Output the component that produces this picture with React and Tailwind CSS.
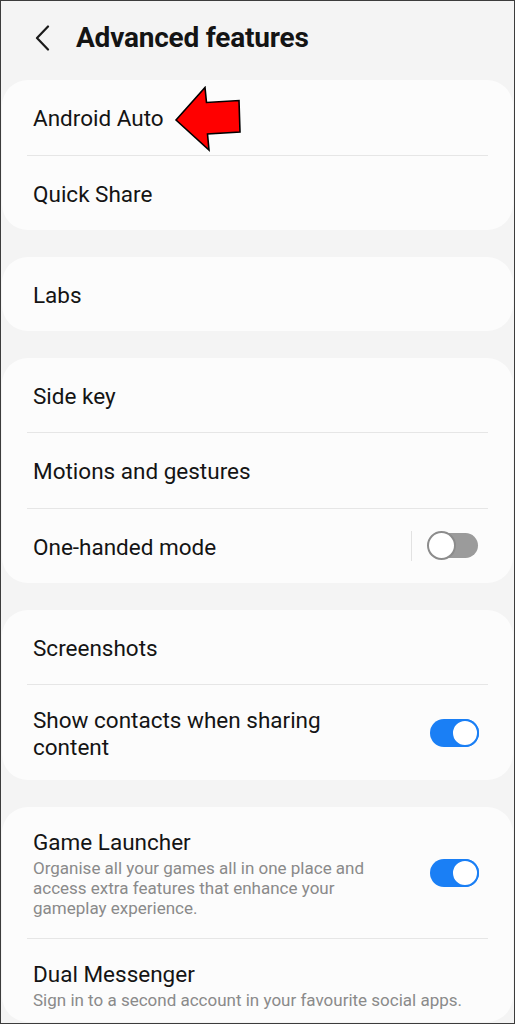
import React from 'react';

const Toggle = ({ on }) =>
  on ? (
    <div className="relative w-[49px] h-[28px] shrink-0">
      <div className="absolute left-0 top-0 w-[49px] h-[28px] rounded-full bg-[#1a7ff5]" />
      <div className="absolute right-0 top-0 w-[28px] h-[28px] rounded-full bg-white border-2 border-[#1a7ff5]" />
    </div>
  ) : (
    <div className="relative w-[51px] h-[29px] shrink-0">
      <div className="absolute right-0 top-[2px] w-[48px] h-[25px] rounded-full bg-[#9b9b9b]" />
      <div className="absolute left-0 top-0 w-[29px] h-[29px] rounded-full bg-white border-2 border-[#8c8c8c]" />
    </div>
  );

const Divider = () => <div className="mx-[25px] h-px bg-[#e6e6e6]" />;

const Row = ({ title, children }) => (
  <div className="h-[74.5px] flex items-center pl-[31px] pr-[35px] text-[22.5px] text-[#141414]">
    <span className="flex-1 pt-[4px]">{title}</span>
    {children}
  </div>
);

const Card = ({ children }) => (
  <div className="mx-px bg-[#fcfcfc] rounded-[26px] overflow-hidden">{children}</div>
);

const App = () => {
  return (
    <div
      className="w-[515px] h-[1024px] border border-[#3c3c3c] bg-[#f4f4f4] overflow-hidden relative"
      style={{ fontFamily: 'Roboto, "Noto Sans", sans-serif' }}
    >
      {/* Header */}
      <div className="h-[79px] flex items-center pl-[34px] pb-[6px]">
        <svg width="16" height="26" viewBox="0 0 16 26" className="text-[#1a1a1a]">
          <path d="M13 1.5 L2 13 L13 24.5" fill="none" stroke="currentColor" strokeWidth="2.2" strokeLinecap="round" strokeLinejoin="round" />
        </svg>
        <h1 className="ml-[25px] text-[28px] font-bold text-[#141414] tracking-[-0.2px]">Advanced features</h1>
      </div>

      <div className="flex flex-col gap-[26.5px]">
        <Card>
          <div className="relative">
            <Row title="Android Auto" />
            <svg className="absolute left-[172px] top-[6px]" width="70" height="66" viewBox="172 86 70 66">
              <polygon
                points="174,120 203,87.5 204.5,102.5 237,100.5 238,132 205.5,134 207,150"
                fill="#ff0000"
                stroke="#000"
                strokeWidth="1.6"
                strokeLinejoin="miter"
              />
            </svg>
          </div>
          <Divider />
          <Row title="Quick Share" />
        </Card>

        <Card>
          <Row title="Labs" />
        </Card>

        <Card>
          <Row title="Side key" />
          <Divider />
          <Row title="Motions and gestures" />
          <Divider />
          <Row title="One-handed mode">
            <div className="w-px h-[30px] bg-[#e2e2e2] mr-[15px]" />
            <Toggle on={false} />
          </Row>
        </Card>

        <Card>
          <Row title="Screenshots" />
          <Divider />
          <div className="h-[95px] flex items-center justify-between pl-[31px] pr-[34px] text-[22.5px] text-[#141414]">
            <span className="w-[330px] leading-[27px] pt-[3px]">Show contacts when sharing content</span>
            <Toggle on />
          </div>
        </Card>

        <Card>
          <div className="flex items-center justify-between pl-[31px] pr-[34px] pt-[22px] pb-[20px]">
            <div className="w-[365px]">
              <div className="text-[22.5px] leading-[27px] text-[#141414]">Game Launcher</div>
              <div className="mt-[2px] text-[17px] leading-[20px] text-[#8a8a8a]">
                Organise all your games all in one place and access extra features that enhance your gameplay experience.
              </div>
            </div>
            <Toggle on />
          </div>
          <Divider />
          <div className="pl-[31px] pr-[20px] pt-[22px] pb-[12px]">
            <div className="text-[22.5px] leading-[27px] text-[#141414]">Dual Messenger</div>
            <div className="mt-[2px] text-[17px] leading-[20px] text-[#8a8a8a] whitespace-nowrap">
              Sign in to a second account in your favourite social apps.
            </div>
          </div>
        </Card>
      </div>
    </div>
  );
};

export default App;
